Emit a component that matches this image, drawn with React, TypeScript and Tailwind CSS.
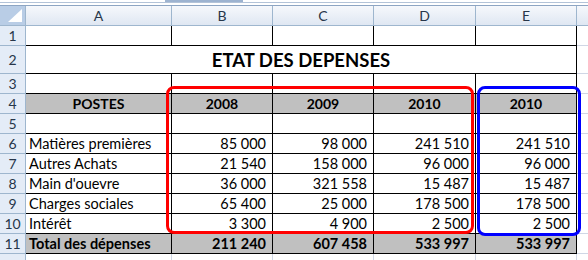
import React from 'react'

const cols = ['A', 'B', 'C', 'D', 'E']

const rows = [
  { label: 'Matières premières', values: ['85 000', '98 000', '241 510', '241 510'] },
  { label: 'Autres Achats', values: ['21 540', '158 000', '96 000', '96 000'] },
  { label: "Main d'ouevre", values: ['36 000', '321 558', '15 487', '15 487'] },
  { label: 'Charges sociales', values: ['65 400', '25 000', '178 500', '178 500'] },
  { label: 'Intérêt', values: ['3 300', '4 900', '2 500', '2 500'] },
]

const RowHead = ({ n, h = 'h-[20px]' }: { n?: number | string; h?: string }) => (
  <div
    className={`${h} flex items-center justify-center bg-[#e4ecf7] border-r border-b border-[#9eb6ce] text-[14px] text-[#27364a]`}
  >
    {n}
  </div>
)

const Cell = ({
  children,
  className = '',
}: {
  children?: React.ReactNode
  className?: string
}) => (
  <div className={`h-[20px] flex items-center border-r border-b border-black ${className}`}>
    {children}
  </div>
)

const Light = ({ right = true }: { right?: boolean }) => (
  <div className={`border-b border-[#d0d7e5] ${right ? 'border-r' : ''}`} />
)

export default function App() {
  return (
    <div className="relative w-[588px] h-[260px] overflow-hidden bg-white font-['Lato',sans-serif] text-[14.5px] text-black">
      {/* formula bar edge */}
      <div className="relative h-[6px] border-b border-[#8da5c3] bg-white">
        <div className="absolute left-0 right-0 top-[2px] h-px bg-[#b3c3d8]" />
        <div className="absolute left-[165px] top-0 w-[78px] h-[2px] bg-[#9db3d0]" />
      </div>

      <div className="grid grid-cols-[26px_146px_101px_101px_102px_101px_11px] auto-rows-min">
        {/* column headers */}
        <div className="h-[20px] relative bg-[#b9cde6] border-r border-b border-[#9eb6ce]">
          <svg className="absolute right-[3px] bottom-[3px]" width="14" height="13" viewBox="0 0 14 13">
            <polygon points="14,0 14,13 0,13" fill="#ffffff" />
          </svg>
        </div>
        {cols.map((c) => (
          <div
            key={c}
            className="h-[20px] flex items-center justify-center bg-gradient-to-b from-[#f6f8fc] to-[#dfe7f2] border-r border-b border-[#9eb6ce] text-[14px] text-[#27364a]"
          >
            {c}
          </div>
        ))}
        <div className="h-[20px] bg-gradient-to-b from-[#f6f8fc] to-[#dfe7f2] border-b border-[#9eb6ce]" />

        {/* row 1 */}
        <RowHead n={1} />
        {cols.map((c) => (
          <Cell key={c} />
        ))}
        <Light right={false} />

        {/* row 2 */}
        <RowHead n={2} h="h-[28px]" />
        <div className="col-span-5 h-[28px] flex items-center justify-center border-r border-b border-black font-bold text-[18.5px] pt-[2px]">
          ETAT DES DEPENSES
        </div>
        <Light right={false} />

        {/* row 3 */}
        <RowHead n={3} />
        {cols.map((c) => (
          <Cell key={c} />
        ))}
        <Light right={false} />

        {/* row 4 */}
        <RowHead n={4} />
        {['POSTES', '2008', '2009', '2010', '2010'].map((t, i) => (
          <Cell key={i} className="justify-center bg-[#c0c0c0] font-bold text-[14px]">
            {t}
          </Cell>
        ))}
        <Light right={false} />

        {/* row 5 */}
        <RowHead n={5} />
        {cols.map((c) => (
          <Cell key={c} />
        ))}
        <Light right={false} />

        {/* rows 6-10 */}
        {rows.map((r, i) => (
          <React.Fragment key={r.label}>
            <RowHead n={6 + i} />
            <Cell className="pl-[3px]">{r.label}</Cell>
            {r.values.map((v, j) => (
              <Cell key={j} className="justify-end pr-[6px]">
                {v}
              </Cell>
            ))}
            <Light right={false} />
          </React.Fragment>
        ))}

        {/* row 11 */}
        <RowHead n={11} />
        <Cell className="pl-[3px] bg-[#c0c0c0] font-bold">Total des dépenses</Cell>
        {['211 240', '607 458', '533 997', '533 997'].map((v, j) => (
          <Cell key={j} className="justify-end pr-[6px] bg-[#c0c0c0] font-bold">
            {v}
          </Cell>
        ))}
        <Light right={false} />

        {/* row 12, mostly cut off by the window */}
        <RowHead />
        {cols.map((c) => (
          <div key={c} className="h-[20px] border-r border-b border-[#d0d7e5]" />
        ))}
        <Light right={false} />
      </div>

      {/* highlight frames */}
      <div className="absolute left-[166px] top-[86px] w-[308px] h-[148px] border-[3px] border-[#ff0000] rounded-[8px]" />
      <div className="absolute left-[477px] top-[86px] w-[104px] h-[150px] border-[3px] border-[#0000ff] rounded-[8px]" />
    </div>
  )
}
